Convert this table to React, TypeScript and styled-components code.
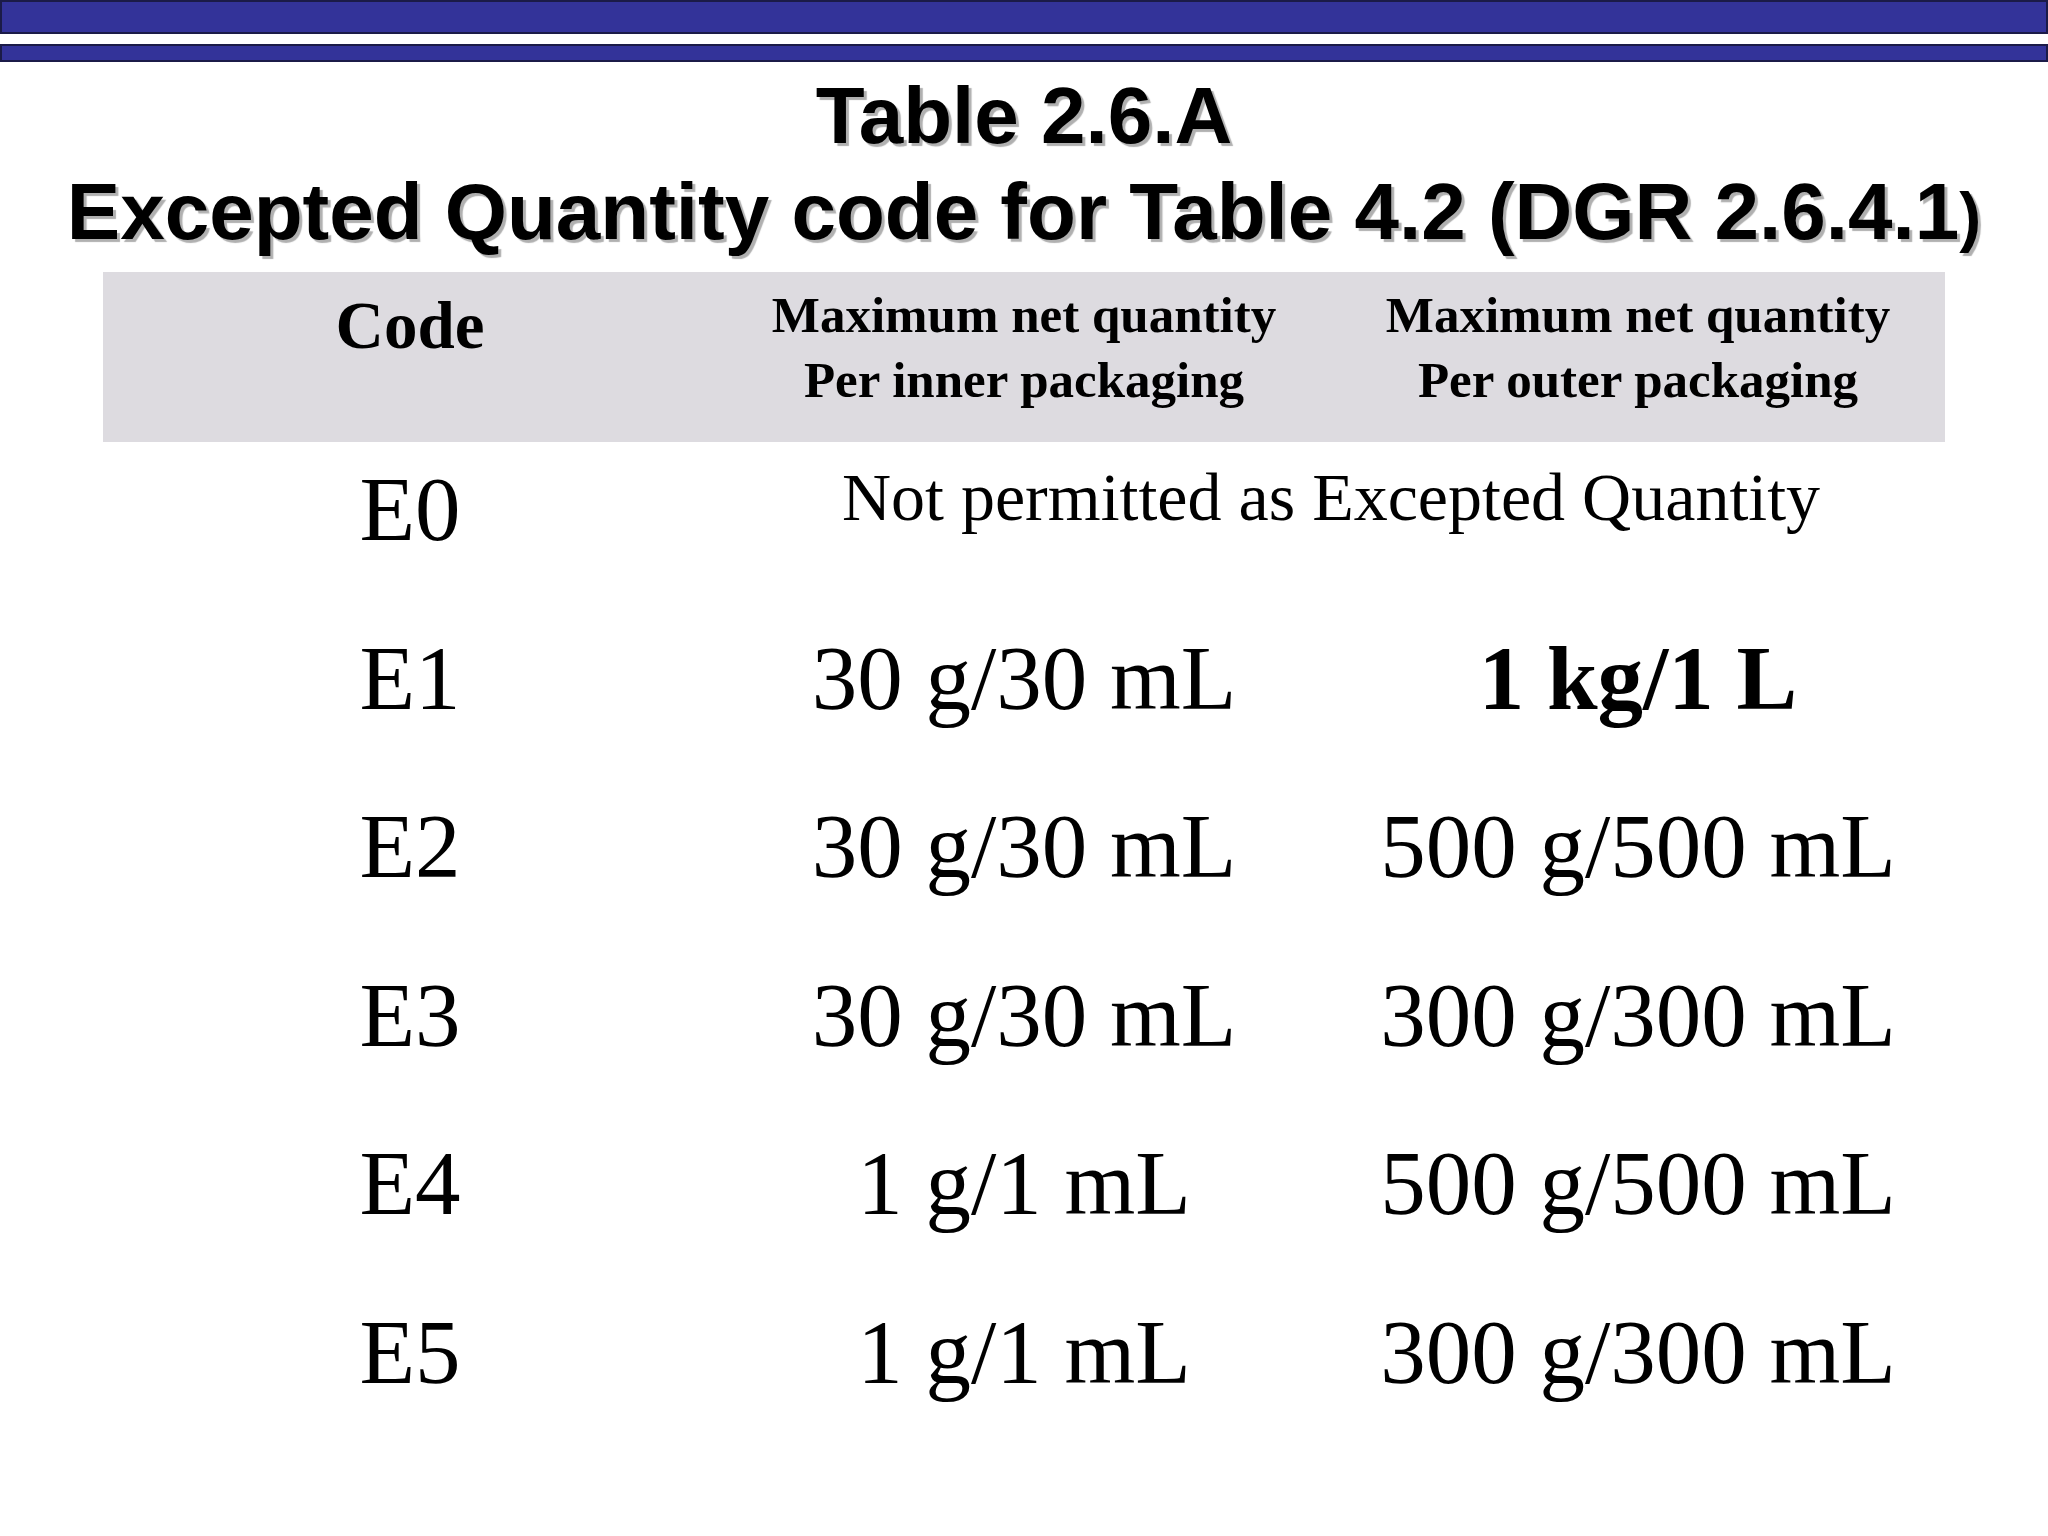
import React, { FC } from "react";
import styled, { createGlobalStyle } from "styled-components";

const GlobalStyle = createGlobalStyle`
  html, body {
    margin: 0;
    padding: 0;
    background: #ffffff;
  }
`;

const Page = styled.div`
  width: 2048px;
  height: 1536px;
  background: #ffffff;
  display: flex;
  flex-direction: column;
  overflow: hidden;
`;

const Bar = styled.div<{ $height: number }>`
  height: ${(p) => p.$height}px;
  box-sizing: border-box;
  background: #333399;
  border: 2px solid #1b1b48;
`;

const Bars = styled.div`
  display: flex;
  flex-direction: column;
  gap: 10px;
`;

const Title = styled.h1`
  margin: 6px 0 0;
  font-family: "Liberation Sans", Arial, sans-serif;
  font-weight: 700;
  font-size: 80px;
  line-height: 96px;
  text-align: center;
  color: #000000;
  text-shadow: 3px 3px 1px #b0b0b0;
`;

const SmallParen = styled.span`
  font-size: 66px;
`;

const Table = styled.div`
  width: 1842px;
  margin: 8px auto 0;
  font-family: "Liberation Serif", "Times New Roman", serif;
  color: #000000;
`;

const HeaderRow = styled.div`
  display: grid;
  grid-template-columns: repeat(3, 1fr);
  height: 170px;
  background: #dddbe0;
`;

const HeadCell = styled.div<{ $big?: boolean }>`
  padding-top: ${(p) => (p.$big ? 15 : 11)}px;
  text-align: center;
  white-space: nowrap;
  font-weight: 700;
  font-size: ${(p) => (p.$big ? 67 : 51)}px;
  line-height: ${(p) => (p.$big ? 76 : 65)}px;
`;

const DataRow = styled.div`
  display: grid;
  grid-template-columns: repeat(3, 1fr);
  height: 168.6px;
`;

const Cell = styled.div<{ $span?: number; $bold?: boolean; $note?: boolean }>`
  grid-column: span ${(p) => p.$span ?? 1};
  padding-top: 18px;
  text-align: center;
  white-space: nowrap;
  font-weight: ${(p) => (p.$bold ? 700 : 400)};
  font-size: ${(p) => (p.$note ? 68 : 91)}px;
  line-height: ${(p) => (p.$note ? 75 : 100)}px;
`;

type Row = { code: string; inner: string; outer: string; boldOuter?: boolean };

const rows: Row[] = [
  { code: "E1", inner: "30 g/30 mL", outer: "1 kg/1 L", boldOuter: true },
  { code: "E2", inner: "30 g/30 mL", outer: "500 g/500 mL" },
  { code: "E3", inner: "30 g/30 mL", outer: "300 g/300 mL" },
  { code: "E4", inner: "1 g/1 mL", outer: "500 g/500 mL" },
  { code: "E5", inner: "1 g/1 mL", outer: "300 g/300 mL" },
];

const App: FC = () => {
  return (
    <Page>
      <GlobalStyle />
      <Bars>
        <Bar $height={34} />
        <Bar $height={18} />
      </Bars>
      <Title>
        Table 2.6.A
        <br />
        Excepted Quantity code for Table 4.2 (DGR 2.6.4.1<SmallParen>)</SmallParen>
      </Title>
      <Table>
        <HeaderRow>
          <HeadCell $big>Code</HeadCell>
          <HeadCell>
            Maximum net quantity
            <br />
            Per inner packaging
          </HeadCell>
          <HeadCell>
            Maximum net quantity
            <br />
            Per outer packaging
          </HeadCell>
        </HeaderRow>
        <DataRow>
          <Cell>E0</Cell>
          <Cell $span={2} $note>
            Not permitted as Excepted Quantity
          </Cell>
        </DataRow>
        {rows.map((r) => (
          <DataRow key={r.code}>
            <Cell>{r.code}</Cell>
            <Cell>{r.inner}</Cell>
            <Cell $bold={r.boldOuter}>{r.outer}</Cell>
          </DataRow>
        ))}
      </Table>
    </Page>
  );
};

export default App;
